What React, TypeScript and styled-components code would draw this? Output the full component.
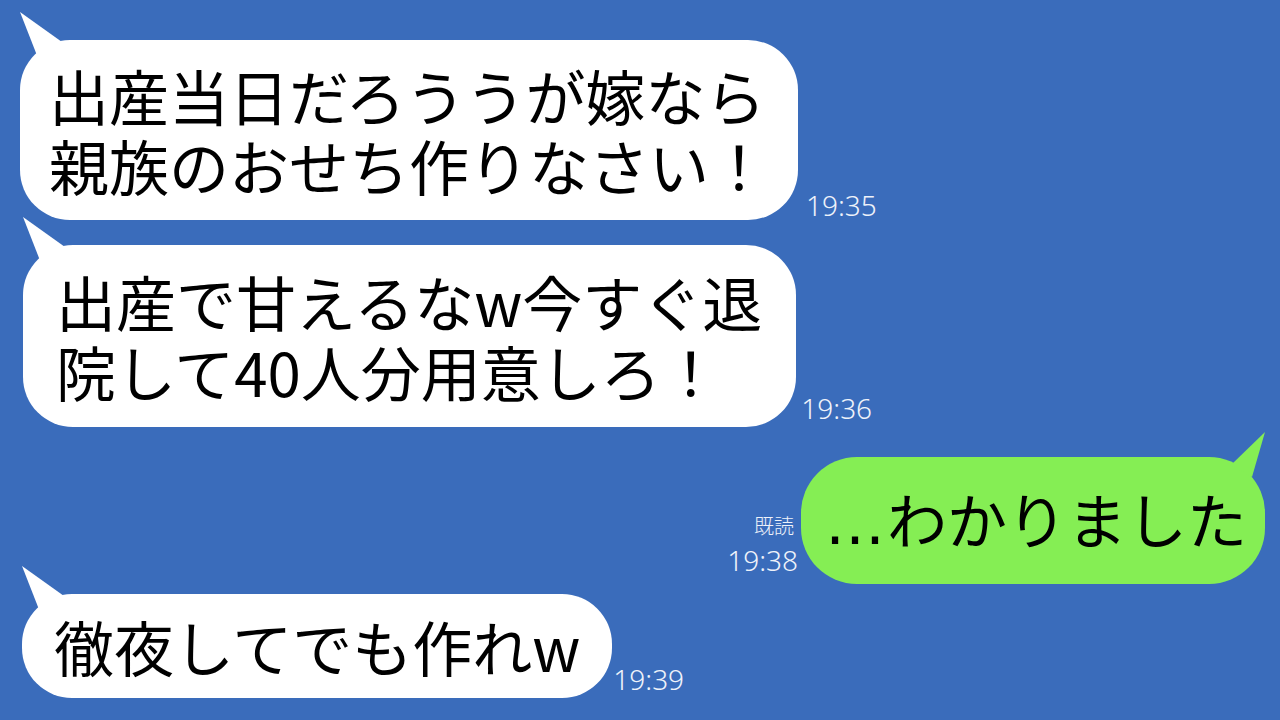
import React from "react";
import styled, { createGlobalStyle } from "styled-components";

const GlobalStyle = createGlobalStyle`
  html, body {
    margin: 0;
    padding: 0;
    background: #3a6cbb;
  }
  body {
    font-family: "Noto Sans CJK JP", "Noto Sans", sans-serif;
  }
`;

const Screen = styled.div`
  width: 1280px;
  height: 720px;
  overflow: hidden;
  background: #3a6cbb;
  display: flex;
  flex-direction: column;
  padding-top: 40px;
  box-sizing: border-box;
`;

const Row = styled.div<{ $mine?: boolean; $top: number; $left?: number }>`
  display: flex;
  align-items: flex-end;
  justify-content: ${(p) => (p.$mine ? "flex-end" : "flex-start")};
  margin-top: ${(p) => p.$top}px;
  padding: ${(p) => (p.$mine ? "0 15px 0 0" : `0 0 0 ${p.$left ?? 20}px`)};
`;

const Bubble = styled.div<{ $mine?: boolean; $padY: number; $padL: number; $padR: number }>`
  position: relative;
  background: ${(p) => (p.$mine ? "#85ee54" : "#ffffff")};
  color: #000;
  border-radius: ${(p) => (p.$mine ? "56px" : "50px")};
  padding: ${(p) => `${p.$padY}px ${p.$padR}px ${p.$padY}px ${p.$padL}px`};
  font-size: 60px;
  line-height: 70px;
  white-space: nowrap;
`;

const Tail = styled.svg<{ $mine?: boolean }>`
  position: absolute;
  top: -30px;
  width: 50px;
  height: 56px;
  overflow: visible;
  ${(p) => (p.$mine ? "right: -4px;" : "left: -4px;")}
`;

const Dots = styled.span`
  font-family: "DejaVu Sans", "Noto Sans", sans-serif;
  margin-right: 2px;
`;

const Meta = styled.div<{ $gap: number; $lift: number }>`
  display: flex;
  flex-direction: column;
  align-items: flex-end;
  margin: 0 ${(p) => p.$gap}px ${(p) => p.$lift}px;
  color: #eef2fa;
  font-family: "Noto Sans", "Noto Sans CJK JP", sans-serif;
  font-weight: 300;
`;

const Read = styled.span`
  font-family: "Noto Sans CJK JP", sans-serif;
  font-size: 20px;
  line-height: 24px;
  margin-bottom: 8px;
  margin-right: 4px;
`;

const Time = styled.span`
  font-size: 28px;
  line-height: 28px;
`;

const LeftTail = () => (
  <Tail viewBox="0 0 50 56">
    <polygon points="4,2 22,48 46,32" fill="#ffffff" />
  </Tail>
);

const RightTail = () => (
  <Tail $mine viewBox="0 0 50 56">
    <polygon points="46,5 12,38 33,50" fill="#85ee54" />
  </Tail>
);

const App = () => {
  return (
    <Screen>
      <GlobalStyle />
      <Row $top={0}>
        <Bubble $padY={20} $padL={29} $padR={29}>
          <LeftTail />
          出産当日だろううが嫁なら
          <br />
          親族のおせち作りなさい！
        </Bubble>
        <Meta $gap={8} $lift={1}>
          <Time>19:35</Time>
        </Meta>
      </Row>
      <Row $top={25} $left={23}>
        <Bubble $padY={21} $padL={33} $padR={34}>
          <LeftTail />
          出産で甘えるなw今すぐ退
          <br />
          院して40人分用意しろ！
        </Bubble>
        <Meta $gap={5} $lift={5}>
          <Time>19:36</Time>
        </Meta>
      </Row>
      <Row $mine $top={30}>
        <Meta $gap={3} $lift={10}>
          <Read>既読</Read>
          <Time>19:38</Time>
        </Meta>
        <Bubble $mine $padY={26} $padL={24} $padR={18}>
          <RightTail />
          <Dots>…</Dots>わかりました
        </Bubble>
      </Row>
      <Row $top={10} $left={22}>
        <Bubble $padY={17} $padL={32} $padR={32}>
          <LeftTail />
          徹夜してでも作れw
        </Bubble>
        <Meta $gap={1} $lift={5}>
          <Time>19:39</Time>
        </Meta>
      </Row>
    </Screen>
  );
};

export default App;
